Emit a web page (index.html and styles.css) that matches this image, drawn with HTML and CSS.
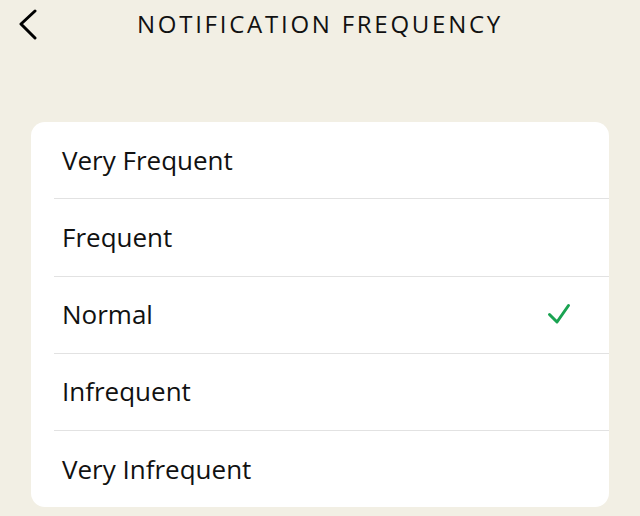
FILE: index.html
```html
<!DOCTYPE html>
<html>
<head>
<meta charset="utf-8">
<link rel="stylesheet" href="styles.css">
</head>
<body>
<div class="page">
  <header class="topbar">
    <button class="back" aria-label="Back">
      <svg width="24" height="32" viewBox="0 0 24 32"><path d="M19 3 L5 16 L19 30" fill="none" stroke="#000" stroke-width="3" stroke-linecap="round" stroke-linejoin="round"/></svg>
    </button>
    <h1 class="title">NOTIFICATION FREQUENCY</h1>
  </header>
  <ul class="card">
    <li class="row"><span>Very Frequent</span></li>
    <li class="row"><span>Frequent</span></li>
    <li class="row"><span>Normal</span>
      <svg class="check" width="26" height="24" viewBox="0 0 26 24"><path d="M2.5 12.5 L10 20 L21.5 3.5" fill="none" stroke="#1aa352" stroke-width="3" stroke-linecap="round" stroke-linejoin="round"/></svg>
    </li>
    <li class="row"><span>Infrequent</span></li>
    <li class="row"><span>Very Infrequent</span></li>
  </ul>
</div>
</body>
</html>
```
FILE: styles.css
```css
* { box-sizing: border-box; }
html, body { margin: 0; padding: 0; }
body {
  background: #f2efe4;
  font-family: "Open Sans", Lato, sans-serif;
  color: #111;
  width: 640px;
  height: 516px;
  overflow: hidden;
}
.page { padding: 0 31px 0 31px; }
.topbar {
  position: relative;
  height: 122px;
  display: flex;
  justify-content: center;
}
.back {
  position: absolute;
  left: -15px;
  top: 8px;
  background: none;
  border: 0;
  padding: 0;
  width: 24px;
  height: 32px;
  display: flex;
}
.title {
  margin: 8px 0 0 0;
  font-size: 24px;
  font-weight: 400;
  letter-spacing: 2.75px;
  line-height: 32px;
  height: 32px;
}
.card {
  list-style: none;
  margin: 0;
  padding: 0 0 0 23px;
  background: #fff;
  border-radius: 14px;
  overflow: hidden;
}
.row {
  height: 77.25px;
  display: flex;
  align-items: center;
  justify-content: space-between;
  padding: 0 36px 1px 8px;
  font-size: 26px;
  border-bottom: 1px solid #e2e2e2;
}
.row:last-child { border-bottom: 0; height: 76px; }
.check { display: block; }
```
